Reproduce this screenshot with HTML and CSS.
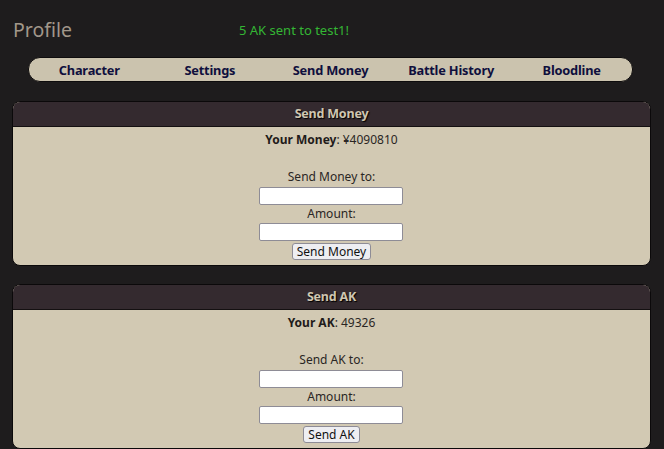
FILE: index.html
```html
<!DOCTYPE html>
<html>
<head>
<meta charset="utf-8">
<title>Profile</title>
<link rel="stylesheet" href="styles.css">
</head>
<body>
<div class="top">
  <h1 class="title">Profile</h1>
  <span class="msg">5 AK sent to test1!</span>
</div>
<nav class="nav">
  <a class="nav-item">Character</a>
  <a class="nav-item">Settings</a>
  <a class="nav-item">Send Money</a>
  <a class="nav-item">Battle History</a>
  <a class="nav-item">Bloodline</a>
</nav>
<section class="panel">
  <div class="panel-head">Send Money</div>
  <div class="panel-body">
    <div class="line"><b>Your Money</b>: ¥4090810</div>
    <div class="line"></div>
    <div class="line">Send Money to:</div>
    <input class="field" type="text">
    <div class="line">Amount:</div>
    <input class="field" type="text">
    <button class="btn">Send Money</button>
  </div>
</section>
<section class="panel">
  <div class="panel-head">Send AK</div>
  <div class="panel-body">
    <div class="line"><b>Your AK</b>: 49326</div>
    <div class="line"></div>
    <div class="line">Send AK to:</div>
    <input class="field" type="text">
    <div class="line">Amount:</div>
    <input class="field" type="text">
    <button class="btn">Send AK</button>
  </div>
</section>
</body>
</html>
```
FILE: styles.css
```css
html, body {
  margin: 0;
  padding: 0;
  background: #1e1c1d;
  font-family: "Noto Sans", "Open Sans", sans-serif;
  font-size: 12px;
}
.top {
  height: 57px;
  display: flex;
  align-items: center;
  padding: 2px 13px 0 13px;
  box-sizing: border-box;
}
.title {
  margin: 0;
  width: 226px;
  font-size: 19.5px;
  font-weight: normal;
  color: #a2978a;
}
.msg {
  color: #34b634;
  font-size: 13px;
}
.nav {
  margin: 0 31px 0 28px;
  height: 25px;
  box-sizing: border-box;
  border: 1px solid #0e0c0d;
  border-radius: 12px;
  background: #cbc3ae;
  display: grid;
  grid-template-columns: repeat(5, 1fr);
  align-items: center;
}
.nav-item {
  text-align: center;
  font-weight: bold;
  font-size: 12.8px;
  color: #0f0f3d;
  letter-spacing: -0.2px;
}
.panel {
  margin: 19px 13px 0 12px;
  border: 1px solid #0b090a;
  border-radius: 8px;
  overflow: hidden;
  background: #d2c9b3;
}
.panel + .panel {
  margin-top: 18px;
}
.panel-head {
  height: 24px;
  line-height: 24px;
  background: #342a2f;
  border-bottom: 1px solid #141011;
  text-align: center;
  font-weight: bold;
  font-size: 12.5px;
  color: #cfc6b1;
  text-shadow: 1px 1px 1px #000;
  letter-spacing: -0.2px;
}
.panel-body {
  padding: 4px 0 5px 0;
  text-align: center;
  color: #2a2624;
}
.line {
  height: 18.5px;
  line-height: 18.5px;
}
.line b {
  color: #1f1b1a;
}
.field {
  display: block;
  margin: 0 auto;
  width: 144px;
  height: 18px;
  box-sizing: border-box;
  border: 1px solid #8e8c96;
  border-radius: 2px;
  background: #fff;
  padding: 0 2px;
  position: relative;
  left: -1px;
}
.btn {
  margin-top: 2px;
  height: 17px;
  padding: 0 4px;
  font-family: "Noto Sans", "Open Sans", sans-serif;
  font-size: 12px;
  line-height: 14px;
  color: #111;
  background: #eeeef2;
  border: 1px solid #8e8c96;
  border-radius: 3px;
}
```
